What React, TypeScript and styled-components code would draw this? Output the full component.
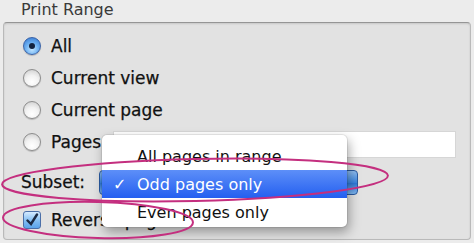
import React from "react";
import styled, { createGlobalStyle } from "styled-components";

const GlobalStyle = createGlobalStyle`
  html, body {
    margin: 0;
    padding: 0;
    background: #ececec;
  }
  body {
    font-family: "DejaVu Sans", "Noto Sans", sans-serif;
  }
`;

type RangeOption = { id: string; label: string; checked?: boolean };

const rangeOptions: RangeOption[] = [
  { id: "all", label: "All", checked: true },
  { id: "view", label: "Current view" },
  { id: "page", label: "Current page" },
];

const subsetOptions = [
  { id: "all", label: "All pages in range" },
  { id: "odd", label: "Odd pages only", selected: true },
  { id: "even", label: "Even pages only" },
];

export default function App() {
  return (
    <>
      <GlobalStyle />
      <Page>
        <Title>Print Range</Title>
        <GroupBox>
          {rangeOptions.map((option) => (
            <Row key={option.id}>
              <Radio checked={!!option.checked} />
              <Label>{option.label}</Label>
            </Row>
          ))}
          <Row>
            <Radio checked={false} />
            <Label>Pages</Label>
            <TextField />
          </Row>
          <SubsetRow>
            <Label>Subset:</Label>
            <SelectButton />
          </SubsetRow>
          <CheckRow>
            <CheckBox>
              <svg width="14" height="14" viewBox="0 0 14 14">
                <path d="M2.5 7.5 L6 11 L12 1.5" fill="none" stroke="#1c2b44" strokeWidth="2.4" strokeLinecap="round" />
              </svg>
            </CheckBox>
            <Label>Reverse pages</Label>
          </CheckRow>
        </GroupBox>

        {/* open subset popup, drawn over the box */}
        <Menu>
          {subsetOptions.map((option) => (
            <MenuItem key={option.id} selected={!!option.selected}>
              <Tick>{option.selected ? "✓" : ""}</Tick>
              {option.label}
            </MenuItem>
          ))}
        </Menu>

        <Annotations width="474" height="243" viewBox="0 0 474 243">
          <ellipse cx="195" cy="180" rx="193" ry="21" transform="rotate(-1.3 195 180)" />
          <ellipse cx="98" cy="220" rx="95" ry="18" transform="rotate(1.5 98 220)" />
        </Annotations>
      </Page>
    </>
  );
}

const Page = styled.div`
  position: relative;
  width: 474px;
  height: 243px;
  overflow: hidden;
  background: #ececec;
  color: #111;
`;

const Title = styled.div`
  height: 22px;
  padding-left: 21px;
  font-size: 16px;
  line-height: 20px;
  color: #3a3a3a;
  box-sizing: border-box;
`;

const GroupBox = styled.div`
  margin: 0 3px;
  height: 218px;
  box-sizing: border-box;
  padding: 7px 14px 0 19px;
  background: #e2e2e2;
  border: 1px solid #b9b9b9;
  border-top-color: #959595;
  border-radius: 4px;
  box-shadow: inset 0 1px 2px rgba(0, 0, 0, 0.12);
  display: flex;
  flex-direction: column;
`;

const Row = styled.div`
  display: flex;
  align-items: center;
  height: 32px;
  gap: 10px;
`;

const Label = styled.span`
  font-size: 17px;
  white-space: nowrap;
  -webkit-text-stroke: 0.25px #111;
`;

const Radio = styled.span<{ checked: boolean }>`
  position: relative;
  width: 18px;
  height: 18px;
  flex: none;
  border-radius: 50%;
  box-sizing: border-box;
  border: 1px solid ${(p) => (p.checked ? "#3a63a8" : "#8d8d8d")};
  background: ${(p) =>
    p.checked
      ? "radial-gradient(circle at 50% 70%, #c4e6ff 0%, #6fb2f2 45%, #2f73cf 100%)"
      : "radial-gradient(circle at 50% 75%, #ffffff 0%, #f2f2f2 45%, #c9c9c9 100%)"};
  box-shadow: 0 1px 1px rgba(0, 0, 0, 0.2);

  &::after {
    content: "";
    display: ${(p) => (p.checked ? "block" : "none")};
    position: absolute;
    left: 5px;
    top: 5px;
    width: 6px;
    height: 6px;
    border-radius: 50%;
    background: #13233f;
  }
`;

const TextField = styled.div`
  flex: 1;
  align-self: flex-end;
  height: 27px;
  margin-left: 2px;
  background: #fff;
  border: 1px solid #d6d6d6;
  box-sizing: border-box;
`;

const SubsetRow = styled.div`
  display: flex;
  align-items: center;
  height: 28px;
  margin: 10px 0 0 -2px;
  gap: 14px;
`;

const SelectButton = styled.div`
  width: 259px;
  height: 25px;
  border-radius: 4px;
  background: linear-gradient(#8fbdf0, #3b86e0 50%, #2a74d4 51%, #7fb6ee);
  border: 1px solid #2a5aa0;
  box-sizing: border-box;
`;

const CheckRow = styled.div`
  display: flex;
  align-items: center;
  height: 28px;
  margin: 10px 0 0 0;
  gap: 10px;
`;

const CheckBox = styled.span`
  width: 18px;
  height: 18px;
  flex: none;
  display: flex;
  align-items: center;
  justify-content: center;
  box-sizing: border-box;
  border: 1px solid #4b6fa8;
  border-radius: 3px;
  background: linear-gradient(#d5ebff, #82bdf2 55%, #5aa3ea);
`;

const Menu = styled.div`
  position: absolute;
  left: 102px;
  top: 135px;
  width: 245px;
  height: 92px;
  box-sizing: border-box;
  padding-top: 7px;
  background: #fff;
  border-radius: 5px;
  box-shadow: 2px 5px 12px rgba(0, 0, 0, 0.35), 0 0 0 1px rgba(0, 0, 0, 0.08);
`;

const MenuItem = styled.div<{ selected: boolean }>`
  display: flex;
  align-items: center;
  height: 28px;
  font-size: 16px;
  white-space: nowrap;
  color: ${(p) => (p.selected ? "#fff" : "#111")};
  background: ${(p) => (p.selected ? "linear-gradient(#5d8ff8, #245ff0)" : "transparent")};
`;

const Tick = styled.span`
  width: 35px;
  padding-left: 11px;
  box-sizing: border-box;
`;

const Annotations = styled.svg`
  position: absolute;
  left: 0;
  top: 0;
  pointer-events: none;

  ellipse {
    fill: none;
    stroke: #c42f7f;
    stroke-width: 2;
  }
`;
